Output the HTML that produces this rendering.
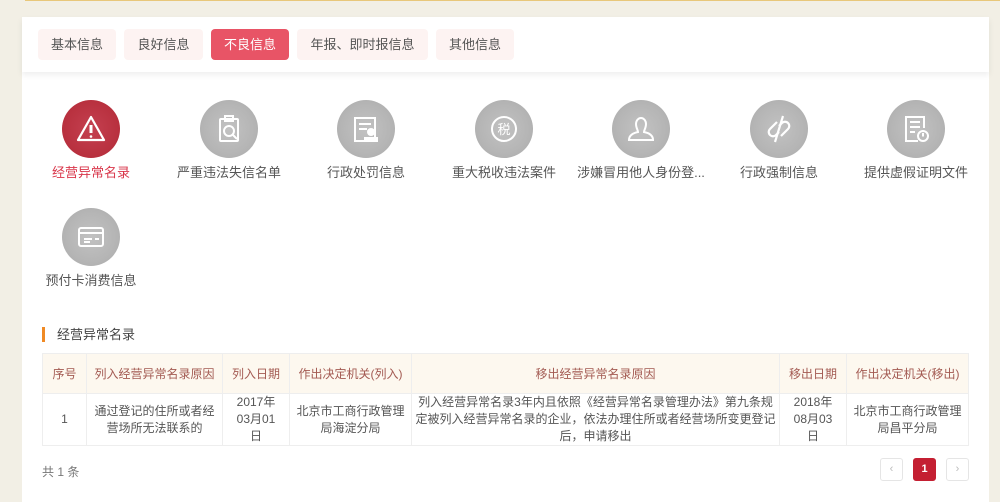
<!DOCTYPE html>
<html><head><meta charset="utf-8"><style>
*{margin:0;padding:0;box-sizing:border-box}
body{width:1000px;height:502px;background:#f2efe5;position:relative;overflow:hidden;font-family:"Liberation Sans","Noto Sans CJK SC",sans-serif;font-size:13px;color:#555}
.topline{position:absolute;left:25px;top:0;width:975px;height:1px;background:#e8c77a}
.card{position:absolute;left:22px;top:17px;width:967px;height:485px;background:#fff}
.tabbar{position:absolute;left:0;top:0;width:967px;height:55px;box-shadow:0 3px 6px rgba(0,0,0,.07)}
.tab{position:absolute;top:12px;height:31px;line-height:31px;text-align:center;background:#fdf3f2;border-radius:4px;color:#555;font-size:13px}
.tab.on{background:#e85466;color:#fff}
.ic{position:absolute;width:140px;text-align:center}
.ic .c{width:58px;height:58px;border-radius:50%;margin:0 auto;background:radial-gradient(circle at 50% 50%,#c2c2c2 0,#b5b5b5 60%,#a9a9a9 100%);position:relative}
.ic.red .c{background:radial-gradient(circle,#c44050 0,#b8303e 70%,#a82836 100%)}
.ic .c svg{position:absolute;left:14px;top:14px}
.ic .t{margin-top:4px;font-size:13px;color:#555;white-space:nowrap}
.ic.red .t{color:#d9364a}
.sec{position:absolute;left:20px;top:310px;font-size:13px;color:#444;padding-left:12px;border-left:3px solid #f08a24;line-height:15px}
table{position:absolute;left:20px;top:336px;width:926px;border-collapse:collapse;font-size:12px;table-layout:fixed}
td,th{border:1px solid #eee;text-align:center;font-weight:normal;padding:0;white-space:nowrap}
th{background:#fdf8ef;color:#a35a52;height:40px}
td{height:52px;color:#555;line-height:17px}
.total{position:absolute;left:20px;top:446px;font-size:12px;color:#777}
.pg{position:absolute;top:441px;width:23px;height:23px;border:1px solid #e5e5e5;border-radius:3px;text-align:center;line-height:21px;color:#bbb;font-size:11px}
.pg.on{background:#c41f32;border-color:#c41f32;color:#fff;font-weight:bold}
</style></head><body>
<div class="topline"></div>
<div class="card">
<div class="tabbar">
<div class="tab" style="left:16px;width:78px">基本信息</div>
<div class="tab" style="left:102px;width:79px">良好信息</div>
<div class="tab on" style="left:189px;width:78px">不良信息</div>
<div class="tab" style="left:275px;width:131px">年报、即时报信息</div>
<div class="tab" style="left:414px;width:78px">其他信息</div>
</div>

<div class="ic red" style="left:-1px;top:83px"><div class="c"><svg width="30" height="30" viewBox="0 0 30 30" fill="none" stroke="#fff" stroke-width="2.2"><path d="M15 3 L28 26 H2 Z" stroke-linejoin="round"/><path d="M15 11 V19" stroke-width="3"/><circle cx="15" cy="22.5" r="1.3" fill="#fff" stroke="none"/></svg></div><div class="t">经营异常名录</div></div>
<div class="ic" style="left:137px;top:83px"><div class="c"><svg width="30" height="30" viewBox="0 0 30 30" fill="none" stroke="#fff" stroke-width="2"><rect x="6" y="5" width="18" height="22" rx="1"/><rect x="11" y="2" width="8" height="5"/><circle cx="15" cy="17" r="5"/><path d="M19 21 l4 4"/></svg></div><div class="t">严重违法失信名单</div></div>
<div class="ic" style="left:274px;top:83px"><div class="c"><svg width="30" height="30" viewBox="0 0 30 30" fill="none" stroke="#fff" stroke-width="2"><rect x="4" y="4" width="20" height="23"/><path d="M8 10h12M8 15h8"/><circle cx="20" cy="18" r="3" fill="#fff"/><path d="M14 28 v-4 h12 v4" fill="#fff"/></svg></div><div class="t">行政处罚信息</div></div>
<div class="ic" style="left:412px;top:83px"><div class="c"><svg width="30" height="30" viewBox="0 0 30 30" fill="none" stroke="#fff" stroke-width="2"><circle cx="15" cy="15" r="12"/><text x="15" y="20" font-size="13" fill="#fff" stroke="none" text-anchor="middle" font-family="Noto Sans CJK SC">税</text></svg></div><div class="t">重大税收违法案件</div></div>
<div class="ic" style="left:549px;top:83px"><div class="c"><svg width="30" height="30" viewBox="0 0 30 30" fill="none" stroke="#fff" stroke-width="2"><path d="M10 10 a5 6 0 1 1 10 0 c0 4-2 6-2 8 c5 1 9 3 9 8 H3 c0-5 4-7 9-8 c0-2-2-4-2-8Z"/></svg></div><div class="t">涉嫌冒用他人身份登...</div></div>
<div class="ic" style="left:687px;top:83px"><div class="c"><svg width="30" height="30" viewBox="0 0 30 30" fill="none" stroke="#fff" stroke-width="2.2"><path d="M13 8 l-7 7 a4 4 0 0 0 6 6 l3-3"/><path d="M17 22 l7-7 a4 4 0 0 0-6-6 l-3 3"/><path d="M11 28 L19 2"/></svg></div><div class="t">行政强制信息</div></div>
<div class="ic" style="left:824px;top:83px"><div class="c"><svg width="30" height="30" viewBox="0 0 30 30" fill="none" stroke="#fff" stroke-width="2"><path d="M17 27 H5 V3 H23 V14"/><path d="M9 8h10M9 13h10M9 18h5"/><circle cx="22" cy="22" r="5"/><path d="M22 19v3.5" /></svg></div><div class="t">提供虚假证明文件</div></div>
<div class="ic" style="left:-1px;top:191px"><div class="c"><svg width="30" height="30" viewBox="0 0 30 30" fill="none" stroke="#fff" stroke-width="2"><rect x="3" y="6" width="24" height="18" rx="2"/><path d="M3 11h24M8 17h8M8 20h6M19 17h4"/></svg></div><div class="t">预付卡消费信息</div></div>

<div class="sec">经营异常名录</div>
<table>
<colgroup><col style="width:44px"><col style="width:136px"><col style="width:67px"><col style="width:122px"><col style="width:368px"><col style="width:67px"><col style="width:122px"></colgroup>
<tr><th>序号</th><th>列入经营异常名录原因</th><th>列入日期</th><th>作出决定机关(列入)</th><th>移出经营异常名录原因</th><th>移出日期</th><th>作出决定机关(移出)</th></tr>
<tr><td>1</td><td>通过登记的住所或者经<br>营场所无法联系的</td><td>2017年<br>03月01<br>日</td><td>北京市工商行政管理<br>局海淀分局</td><td>列入经营异常名录3年内且依照《经营异常名录管理办法》第九条规<br>定被列入经营异常名录的企业，依法办理住所或者经营场所变更登记<br>后，申请移出</td><td>2018年<br>08月03<br>日</td><td>北京市工商行政管理<br>局昌平分局</td></tr>
</table>
<div class="total">共 1 条</div>
<div class="pg" style="left:858px">‹</div>
<div class="pg on" style="left:891px">1</div>
<div class="pg" style="left:924px">›</div>
</div>
</body></html>
